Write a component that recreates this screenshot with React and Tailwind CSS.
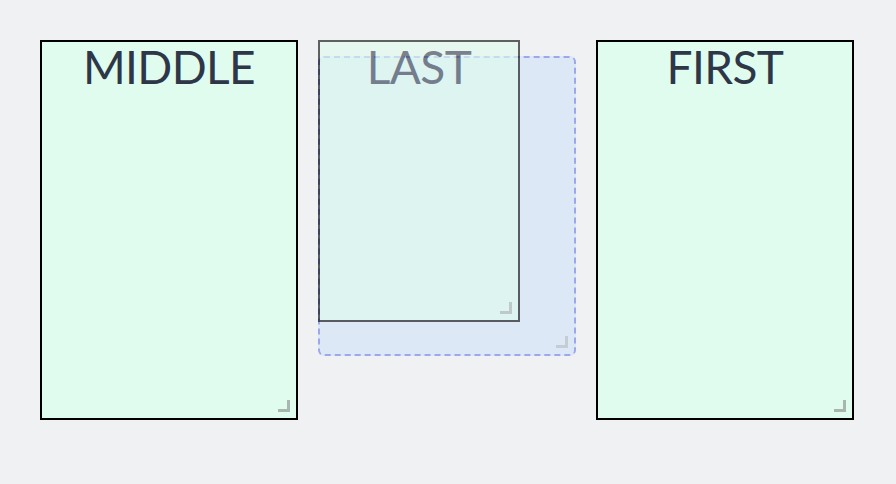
export default function App() {
  const font = { fontFamily: "Lato, 'Open Sans', sans-serif" };
  const Handle = ({ color }) => (
    <div className="absolute right-[6px] bottom-[6px] w-[12px] h-[12px]">
      <div className={`absolute right-0 top-0 w-[3px] h-[12px] ${color}`} />
      <div className={`absolute right-0 bottom-0 w-[12px] h-[3px] ${color}`} />
    </div>
  );
  const Card = ({ label }) => (
    <div className="relative w-[258px] h-[380px] shrink-0 border-2 border-black bg-[#dffcee] pt-[2px]">
      <div className="text-center text-[46px] leading-none tracking-[-0.6px] text-[#2d3748]" style={font}>{label}</div>
      <Handle color="bg-[#a9b6af]" />
    </div>
  );
  return (
    <div className="min-h-screen w-full bg-[#f0f1f3] flex items-start gap-5 p-10">
      <Card label="MIDDLE" />
      <div className="relative w-[258px] h-[380px] shrink-0">
        <div className="absolute left-0 top-[16px] w-[258px] h-[300px] rounded-md border-2 border-dashed border-[#9ca7ec] bg-[#dde8f6]">
          <Handle color="bg-[#c4ccd4]" />
        </div>
        <div className="absolute left-0 top-0 w-[202px] h-[282px] border-2 border-black bg-[#dffcee] pt-[2px] opacity-60">
          <div className="text-center text-[46px] leading-none tracking-[-0.6px] text-[#2d3748]" style={font}>LAST</div>
          <Handle color="bg-[#a9b6af]" />
        </div>
      </div>
      <Card label="FIRST" />
    </div>
  );
}
